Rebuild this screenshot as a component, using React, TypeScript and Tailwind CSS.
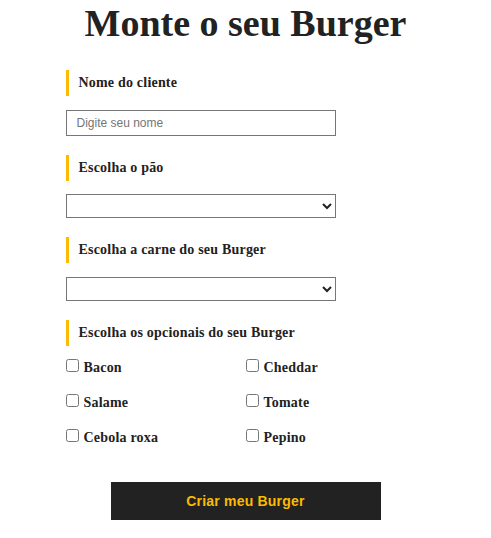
import React from "react";

const opcionais = ["Bacon", "Cheddar", "Salame", "Tomate", "Cebola roxa", "Pepino"];

export default function App() {
  return (
    <div className="font-['Liberation_Serif',serif] text-[#222] bg-white">
      <h1 className="text-[38px] font-bold text-center leading-[42px] pt-[2px] mb-[26px]">
        Monte o seu Burger
      </h1>
      <form className="w-[360px] mx-auto flex flex-col" onSubmit={(e) => e.preventDefault()}>
        <div className="flex flex-col mb-[19px]">
          <label className="self-start font-bold text-[14px] tracking-[0.2px] leading-[16px] py-[5px] px-[10px] border-l-[3px] border-solid border-[#fcba03] mb-[14px]">
            Nome do cliente
          </label>
          <input
            type="text"
            placeholder="Digite seu nome"
            className="w-[270px] h-[26px] border border-solid border-[#767676] px-[10px] text-[12px] font-['Liberation_Sans',Arial,sans-serif] placeholder:text-[#757575] outline-none"
          />
        </div>
        <div className="flex flex-col mb-[19px]">
          <label className="self-start font-bold text-[14px] tracking-[0.2px] leading-[16px] py-[5px] px-[10px] border-l-[3px] border-solid border-[#fcba03] mb-[13px]">
            Escolha o pão
          </label>
          <select className="w-[270px] h-[24px] border border-solid border-[#767676] text-[12px] font-['Liberation_Sans',Arial,sans-serif]">
            <option value=""></option>
          </select>
        </div>
        <div className="flex flex-col mb-[19px]">
          <label className="self-start font-bold text-[14px] tracking-[0.2px] leading-[16px] py-[5px] px-[10px] border-l-[3px] border-solid border-[#fcba03] mb-[14px]">
            Escolha a carne do seu Burger
          </label>
          <select className="w-[270px] h-[24px] border border-solid border-[#767676] text-[12px] font-['Liberation_Sans',Arial,sans-serif]">
            <option value=""></option>
          </select>
        </div>
        <div className="flex flex-row flex-wrap">
          <label className="w-full font-bold text-[14px] tracking-[0.2px] leading-[16px] py-[5px] px-[10px] border-l-[3px] border-solid border-[#fcba03] mb-[14px]">
            Escolha os opcionais do seu Burger
          </label>
          {opcionais.map((o) => (
            <div key={o} className="flex items-start w-1/2 mb-[19px]">
              <input type="checkbox" className="w-[13px] h-[13px] mt-[-1px]" />
              <span className="ml-[5px] font-bold text-[14px] tracking-[0.2px] leading-[16px]">{o}</span>
            </div>
          ))}
        </div>
        <button
          type="submit"
          className="w-[270px] h-[38px] mx-auto mt-[17px] bg-[#222] text-[#fcba03] font-bold text-[14px] tracking-[0.2px] font-['Liberation_Sans',Arial,sans-serif]"
        >
          Criar meu Burger
        </button>
      </form>
    </div>
  );
}
